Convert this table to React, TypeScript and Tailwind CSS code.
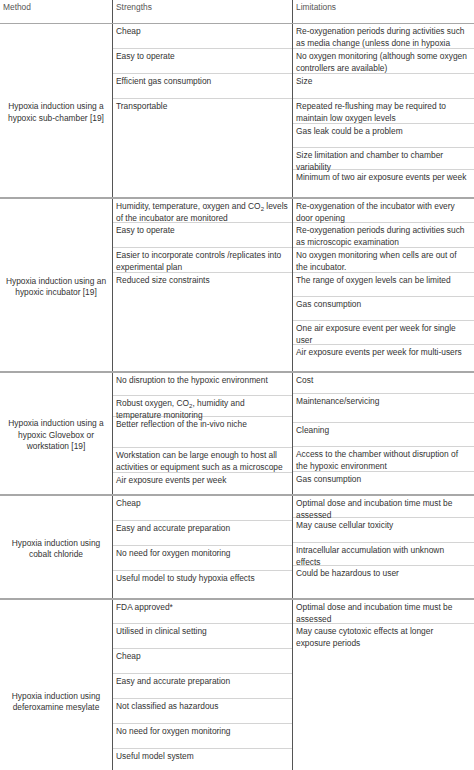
import type { ReactNode } from "react";

type Cell = { h: string; lines: ReactNode[] };
type Group = { method: string[]; strengths: Cell[]; limitations: Cell[] };

const CO2 = (
  <>
    CO<sub className="text-[6px] leading-none">2</sub>
  </>
);

const groups: Group[] = [
  {
    method: ["Hypoxia induction using a", "hypoxic sub-chamber [19]"],
    strengths: [
      { h: "h-[25px]", lines: ["Cheap"] },
      { h: "h-[25px]", lines: ["Easy to operate"] },
      { h: "h-[25px]", lines: ["Efficient gas consumption"] },
      { h: "h-[98px]", lines: ["Transportable"] },
    ],
    limitations: [
      { h: "h-[25px]", lines: ["Re-oxygenation periods during activities such", "as media change (unless done in hypoxia"] },
      { h: "h-[25px]", lines: ["No oxygen monitoring (although some oxygen", "controllers are available)"] },
      { h: "h-[25px]", lines: ["Size"] },
      { h: "h-[25px]", lines: ["Repeated re-flushing may be required to", "maintain low oxygen levels"] },
      { h: "h-[24px]", lines: ["Gas leak could be a problem"] },
      { h: "h-[22px]", lines: ["Size limitation and chamber to chamber", "variability"] },
      { h: "h-[27px]", lines: ["Minimum of two air exposure events per week"] },
    ],
  },
  {
    method: ["Hypoxia induction using an", "hypoxic incubator [19]"],
    strengths: [
      {
        h: "h-[24px]",
        lines: [<>Humidity, temperature, oxygen and {CO2} levels</>, "of the incubator are monitored"],
      },
      { h: "h-[25px]", lines: ["Easy to operate"] },
      { h: "h-[25px]", lines: ["Easier to incorporate controls /replicates into", "experimental plan"] },
      { h: "h-[98px]", lines: ["Reduced size constraints"] },
    ],
    limitations: [
      { h: "h-[24px]", lines: ["Re-oxygenation of the incubator with every", "door opening"] },
      { h: "h-[25px]", lines: ["Re-oxygenation periods during activities such", "as microscopic examination"] },
      { h: "h-[25px]", lines: ["No oxygen monitoring when cells are out of", "the incubator."] },
      { h: "h-[24px]", lines: ["The range of oxygen levels can be limited"] },
      { h: "h-[24px]", lines: ["Gas consumption"] },
      { h: "h-[24px]", lines: ["One air exposure event per week for single", "user"] },
      { h: "h-[26px]", lines: ["Air exposure events per week for multi-users"] },
    ],
  },
  {
    method: ["Hypoxia induction using a", "hypoxic Glovebox or", "workstation [19]"],
    strengths: [
      { h: "h-[23px]", lines: ["No disruption to the hypoxic environment"] },
      { h: "h-[21px]", lines: [<>Robust oxygen, {CO2}, humidity and</>, "temperature monitoring"] },
      { h: "h-[31px]", lines: ["Better reflection of the in-vivo niche"] },
      {
        h: "h-[25px]",
        lines: ["Workstation can be large enough to host all", "activities or equipment such as a microscope"],
      },
      { h: "h-[21px]", lines: ["Air exposure events per week"] },
    ],
    limitations: [
      { h: "h-[21px]", lines: ["Cost"] },
      { h: "h-[29px]", lines: ["Maintenance/servicing"] },
      { h: "h-[24px]", lines: ["Cleaning"] },
      { h: "h-[25px]", lines: ["Access to the chamber without disruption of", "the hypoxic environment"] },
      { h: "h-[22px]", lines: ["Gas consumption"] },
    ],
  },
  {
    method: ["Hypoxia induction using", "cobalt chloride"],
    strengths: [
      { h: "h-[25px]", lines: ["Cheap"] },
      { h: "h-[25px]", lines: ["Easy and accurate preparation"] },
      { h: "h-[25px]", lines: ["No need for oxygen monitoring"] },
      { h: "h-[27px]", lines: ["Useful model to study hypoxia effects"] },
    ],
    limitations: [
      { h: "h-[22px]", lines: ["Optimal dose and incubation time must be", "assessed"] },
      { h: "h-[25px]", lines: ["May cause cellular toxicity"] },
      { h: "h-[23px]", lines: ["Intracellular accumulation with unknown", "effects"] },
      { h: "h-[32px]", lines: ["Could be hazardous to user"] },
    ],
  },
  {
    method: ["Hypoxia induction using", "deferoxamine mesylate"],
    strengths: [
      { h: "h-[24px]", lines: ["FDA approved*"] },
      { h: "h-[25px]", lines: ["Utilised in clinical setting"] },
      { h: "h-[25px]", lines: ["Cheap"] },
      { h: "h-[25px]", lines: ["Easy and accurate preparation"] },
      { h: "h-[25px]", lines: ["Not classified as hazardous"] },
      { h: "h-[25px]", lines: ["No need for oxygen monitoring"] },
      { h: "h-[51px]", lines: ["Useful model system"] },
    ],
    limitations: [
      { h: "h-[24px]", lines: ["Optimal dose and incubation time must be", "assessed"] },
      { h: "h-[176px]", lines: ["May cause cytotoxic effects at longer", "exposure periods"] },
    ],
  },
];

function CellStack({ cells }: { cells: Cell[] }) {
  return (
    <div className="flex flex-col">
      {cells.map((c, i) => (
        <div
          key={i}
          className={`${c.h} pl-[3px] pt-[2px] ${i < cells.length - 1 ? "border-b border-[#d4d4d4]" : ""}`}
        >
          {c.lines.map((l, j) => (
            <div key={j} className="whitespace-nowrap">
              {l}
            </div>
          ))}
        </div>
      ))}
    </div>
  );
}

export default function App() {
  return (
    <div className="h-[770px] w-[474px] overflow-hidden bg-white font-['Liberation_Sans',Arial,sans-serif] text-[8.4px] leading-[11.5px] text-[#333]">
      <div className="flex h-[24px] border-b border-[#a8a8a8] text-[#555]">
        <div className="w-[113px] shrink-0 border-r border-[#555] pl-[3px] pt-[2px]">Method</div>
        <div className="w-[180px] shrink-0 border-r border-[#555] pl-[3px] pt-[2px]">Strengths</div>
        <div className="flex-1 pl-[3px] pt-[2px]">Limitations</div>
      </div>

      {groups.map((g, i) => (
        <div key={i} className="flex border-b-2 border-[#a8a8a8]">
          <div className="flex w-[113px] shrink-0 flex-col items-center justify-center border-r border-[#555] pt-[4px] text-center">
            {g.method.map((m, j) => (
              <div key={j} className="whitespace-nowrap">
                {m}
              </div>
            ))}
          </div>
          <div className="w-[180px] shrink-0 border-r border-[#555]">
            <CellStack cells={g.strengths} />
          </div>
          <div className="flex-1">
            <CellStack cells={g.limitations} />
          </div>
        </div>
      ))}
    </div>
  );
}
